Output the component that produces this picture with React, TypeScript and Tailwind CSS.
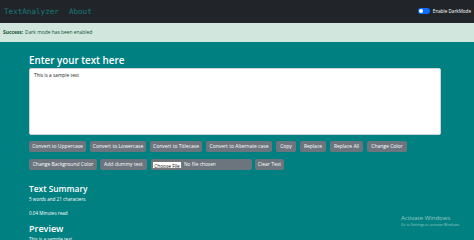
import React from 'react';

const Btn: React.FC<{ label: string; w: string }> = ({ label, w }) => (
  <button className={`h-[11px] ${w} rounded-[2px] bg-[#6c757d] text-white text-[5px] leading-none flex items-center justify-center whitespace-nowrap`}>
    {label}
  </button>
);

const App: React.FC = () => {
  return (
    <div className="h-[240px] w-[474px] overflow-hidden bg-[#008080] font-['Open_Sans',sans-serif] relative">
      {/* Navbar */}
      <nav className="h-[23px] bg-[#212529] flex items-center justify-between pl-[4px] pr-[3px]">
        <div className="flex items-center gap-[10px] font-['DejaVu_Sans_Mono',monospace] text-[7.6px] text-[#177a7a]">
          <span>TextAnalyzer</span>
          <span>About</span>
        </div>
        <div className="flex items-center gap-[3px]">
          <div className="w-[12px] h-[6px] rounded-full bg-[#0d6efd] flex items-center pl-[1px]">
            <div className="w-[4px] h-[4px] rounded-full bg-white" />
          </div>
          <span className="text-[4.6px] text-white">Enable DarkMode</span>
        </div>
      </nav>

      {/* Alert */}
      <div className="h-[19px] bg-[#d1e7dd] text-[#0f5132] text-[4.9px] flex items-center px-[3px]">
        <span className="font-bold mr-[2px]">Success:</span>
        <span>Dark mode has been enabled</span>
      </div>

      <main className="pl-[29px] pt-[12px]">
        <h1 className="text-[9.8px] leading-[13px] font-semibold text-white mb-[1px]">Enter your text here</h1>
        <div className="w-[412px] h-[67px] bg-white rounded-[2px] border border-[#ced4da] px-[4px] pt-[3px] text-[4.8px] text-[#212529]">
          This is a sample text
        </div>

        <div className="flex mt-[6px] gap-[4px]">
          <Btn label="Convert to Uppercase" w="w-[57px]" />
          <Btn label="Convert to Lowercase" w="w-[56px]" />
          <Btn label="Convert to Titlecase" w="w-[52px]" />
          <Btn label="Convert to Alternate case" w="w-[66px]" />
          <Btn label="Copy" w="w-[20px]" />
          <Btn label="Replace" w="w-[26px]" />
          <Btn label="Replace All" w="w-[33px]" />
          <Btn label="Change Color" w="w-[40px]" />
        </div>

        <div className="flex mt-[7px] gap-[3px] items-center">
          <Btn label="Change Background Color" w="w-[68px]" />
          <Btn label="Add dummy text" w="w-[47px]" />
          <div className="h-[11px] w-[101px] rounded-[2px] bg-[#6c757d] flex items-center pl-[1px] gap-[2px] ml-[1px]">
            <span className="h-[8px] w-[30px] bg-white text-[#111] text-[4.8px] leading-[8px] text-center border border-[#777]">Choose File</span>
            <span className="text-white text-[4.8px]">No file chosen</span>
          </div>
          <Btn label="Clear Text" w="w-[29px]" />
        </div>

        <h2 className="mt-[13px] text-[8.4px] leading-[11px] font-semibold text-white">Text Summary</h2>
        <p className="mt-[2px] text-[4.6px] leading-[6px] text-white">5 words and 21 characters</p>
        <p className="mt-[8px] text-[4.6px] leading-[6px] text-white">0.04 Minutes read</p>
        <h2 className="mt-[7px] text-[9px] leading-[12px] font-semibold text-white">Preview</h2>
        <p className="mt-[1px] text-[4.6px] leading-[6px] text-white">This is a sample text</p>
      </main>

      {/* Windows watermark */}
      <div className="absolute left-[401px] top-[215px] text-[#9fc7c7]">
        <div className="text-[6px] leading-[7px]">Activate Windows</div>
        <div className="text-[3.6px] leading-[5px]">Go to Settings to activate Windows.</div>
      </div>
    </div>
  );
};

export default App;
